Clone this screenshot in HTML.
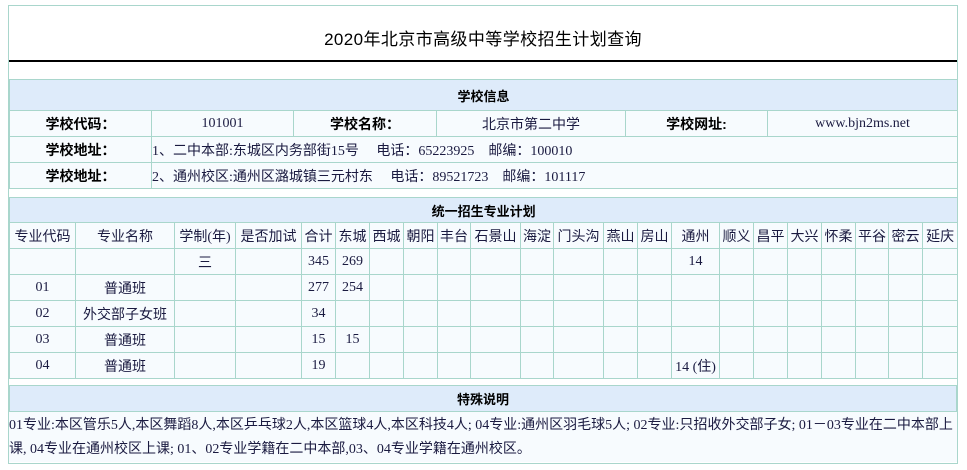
<!DOCTYPE html>
<html><head><meta charset="utf-8"><style>
body{margin:0;width:967px;height:470px;background:#fff;font-family:"Liberation Serif","Noto Sans CJK SC",serif;font-size:14px;color:#000;position:relative;overflow:hidden}
.box{position:absolute;left:8px;top:5px;width:948px;height:457px;border:1px solid #a9d6cc}
.title{position:absolute;left:9px;top:25px;width:948px;text-align:center;font-family:"Liberation Sans","Noto Sans CJK SC",sans-serif;font-size:17px;letter-spacing:0.4px}
.hr{position:absolute;left:9px;top:60px;width:948px;height:1.5px;background:#000}
table{position:absolute;left:9px;border-collapse:collapse;table-layout:fixed;width:948px}
td{border:1px solid #a9d6cc;background:#f7fbfe;text-align:center;padding:0;height:25px;white-space:nowrap;overflow:hidden;color:#1a1a40;font-family:"Liberation Serif","Noto Sans CJK SC",serif}
td.h{background:#deebfa;font-weight:bold;color:#000;font-family:"Liberation Sans","Noto Sans CJK SC",sans-serif;font-size:13px}
td.b{font-weight:bold;color:#000;font-family:"Liberation Sans","Noto Sans CJK SC",sans-serif}
td.l{text-align:left}
.sp{position:absolute;left:9px;top:412px;width:948px;padding-top:2px;line-height:24px;color:#1a1a40;background:#f7fbfe}
</style></head><body>
<div class="box"></div>
<div class="title">2020年北京市高级中等学校招生计划查询</div>
<div class="hr"></div>
<table style="top:79px">
<colgroup><col style="width:142px"><col style="width:142px"><col style="width:143px"><col style="width:189px"><col style="width:142px"><col style="width:190px"></colgroup>
<tr><td class="h" colspan="6" style="height:30px">学校信息</td></tr>
<tr><td class="b">学校代码：</td><td>101001</td><td class="b">学校名称：</td><td>北京市第二中学</td><td class="b">学校网址:</td><td>www.bjn2ms.net</td></tr>
<tr><td class="b">学校地址：</td><td class="l" colspan="5">1、二中本部:东城区内务部街15号　 电话：65223925　邮编：100010</td></tr>
<tr><td class="b">学校地址：</td><td class="l" colspan="5">2、通州校区:通州区潞城镇三元村东　 电话：89521723　邮编：101117</td></tr>
</table>
<table style="top:197px">
<colgroup><col style="width:66px"><col style="width:99px"><col style="width:61px"><col style="width:66px"><col style="width:34px"><col style="width:34px"><col style="width:34px"><col style="width:34px"><col style="width:33px"><col style="width:50px"><col style="width:33px"><col style="width:50px"><col style="width:34px"><col style="width:34px"><col style="width:48px"><col style="width:34px"><col style="width:34px"><col style="width:34px"><col style="width:34px"><col style="width:33px"><col style="width:34px"><col style="width:35px"></colgroup>
<tr><td class="h" colspan="22" style="height:24px">统一招生专业计划</td></tr>
<tr><td>专业代码</td><td>专业名称</td><td>学制(年)</td><td>是否加试</td><td>合计</td><td>东城</td><td>西城</td><td>朝阳</td><td>丰台</td><td>石景山</td><td>海淀</td><td>门头沟</td><td>燕山</td><td>房山</td><td>通州</td><td>顺义</td><td>昌平</td><td>大兴</td><td>怀柔</td><td>平谷</td><td>密云</td><td>延庆</td></tr>
<tr><td></td><td></td><td>三</td><td></td><td>345</td><td>269</td><td></td><td></td><td></td><td></td><td></td><td></td><td></td><td></td><td>14</td><td></td><td></td><td></td><td></td><td></td><td></td><td></td></tr>
<tr><td>01</td><td>普通班</td><td></td><td></td><td>277</td><td>254</td><td></td><td></td><td></td><td></td><td></td><td></td><td></td><td></td><td></td><td></td><td></td><td></td><td></td><td></td><td></td><td></td></tr>
<tr><td>02</td><td>外交部子女班</td><td></td><td></td><td>34</td><td></td><td></td><td></td><td></td><td></td><td></td><td></td><td></td><td></td><td></td><td></td><td></td><td></td><td></td><td></td><td></td><td></td></tr>
<tr><td>03</td><td>普通班</td><td></td><td></td><td>15</td><td>15</td><td></td><td></td><td></td><td></td><td></td><td></td><td></td><td></td><td></td><td></td><td></td><td></td><td></td><td></td><td></td><td></td></tr>
<tr><td>04</td><td>普通班</td><td></td><td></td><td>19</td><td></td><td></td><td></td><td></td><td></td><td></td><td></td><td></td><td></td><td>14 (住)</td><td></td><td></td><td></td><td></td><td></td><td></td><td></td></tr>
</table>
<table style="top:385px">
<tr><td class="h" style="height:25px">特殊说明</td></tr>
</table>
<div class="sp">01专业:本区管乐5人,本区舞蹈8人,本区乒乓球2人,本区篮球4人,本区科技4人; 04专业:通州区羽毛球5人; 02专业:只招收外交部子女; 01－03专业在二中本部上课, 04专业在通州校区上课; 01、02专业学籍在二中本部,03、04专业学籍在通州校区。</div>
</body></html>
